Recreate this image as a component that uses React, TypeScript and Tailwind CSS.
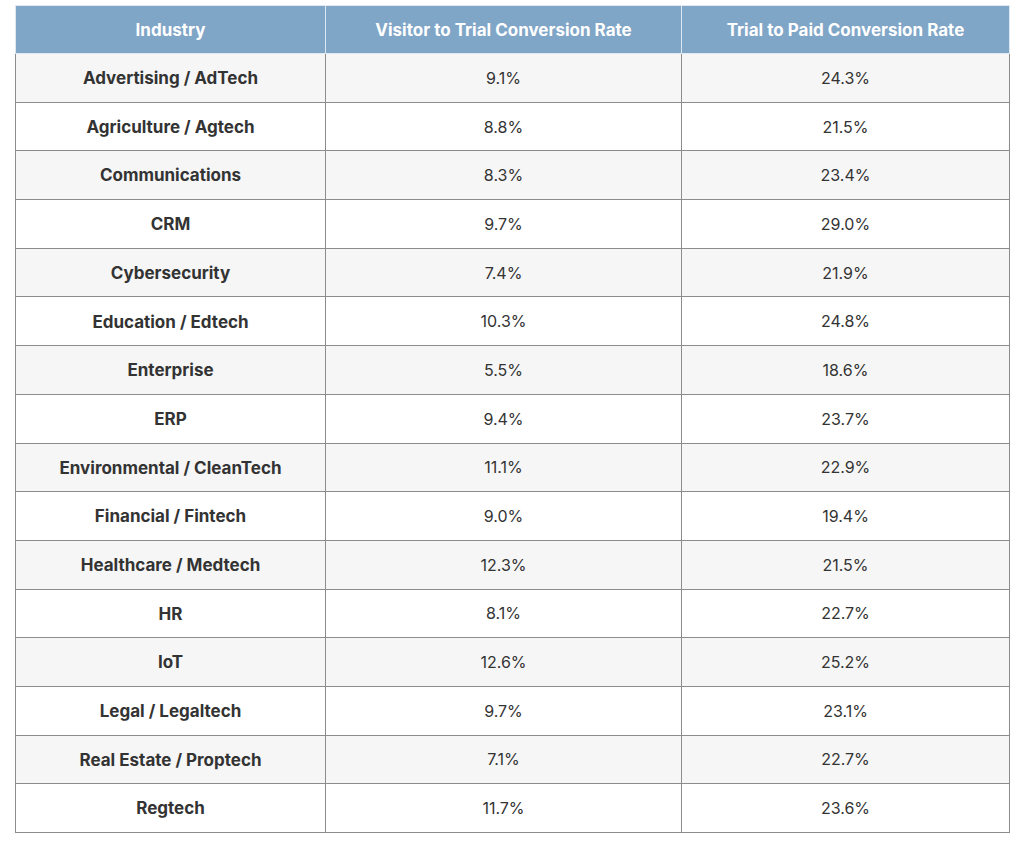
const rows: [string, string, string][] = [
  ["Advertising / AdTech", "9.1%", "24.3%"],
  ["Agriculture / Agtech", "8.8%", "21.5%"],
  ["Communications", "8.3%", "23.4%"],
  ["CRM", "9.7%", "29.0%"],
  ["Cybersecurity", "7.4%", "21.9%"],
  ["Education / Edtech", "10.3%", "24.8%"],
  ["Enterprise", "5.5%", "18.6%"],
  ["ERP", "9.4%", "23.7%"],
  ["Environmental / CleanTech", "11.1%", "22.9%"],
  ["Financial / Fintech", "9.0%", "19.4%"],
  ["Healthcare / Medtech", "12.3%", "21.5%"],
  ["HR", "8.1%", "22.7%"],
  ["IoT", "12.6%", "25.2%"],
  ["Legal / Legaltech", "9.7%", "23.1%"],
  ["Real Estate / Proptech", "7.1%", "22.7%"],
  ["Regtech", "11.7%", "23.6%"],
];

export default function App() {
  return (
    <div className="min-h-screen bg-white pl-[15px] pr-[14px] pt-[5px]" style={{ fontFamily: "Inter, 'Liberation Sans', sans-serif" }}>
      <table className="w-full border-collapse text-[16px]">
        <thead>
          <tr className="h-[48px] bg-[#7fa5c7] text-[17px] text-white">
            <th className="w-[310px] border border-[#dfe8f0] pt-[2px] font-bold">Industry</th>
            <th className="w-[356px] border border-[#dfe8f0] pt-[2px] font-bold">Visitor to Trial Conversion Rate</th>
            <th className="border border-[#dfe8f0] pt-[2px] font-bold">Trial to Paid Conversion Rate</th>
          </tr>
        </thead>
        <tbody>
          {rows.map(([name, v, t], i) => (
            <tr key={name} className={i % 2 === 0 ? "h-[48.7px] bg-[#f6f6f6]" : "h-[48.7px] bg-white"}>
              <td className="border border-[#8c8c8c] pt-[2px] text-center text-[17px] font-bold text-[#333]">{name}</td>
              <td className="border border-[#8c8c8c] text-center text-[#333]">{v}</td>
              <td className="border border-[#8c8c8c] text-center text-[#333]">{t}</td>
            </tr>
          ))}
        </tbody>
      </table>
    </div>
  );
}
